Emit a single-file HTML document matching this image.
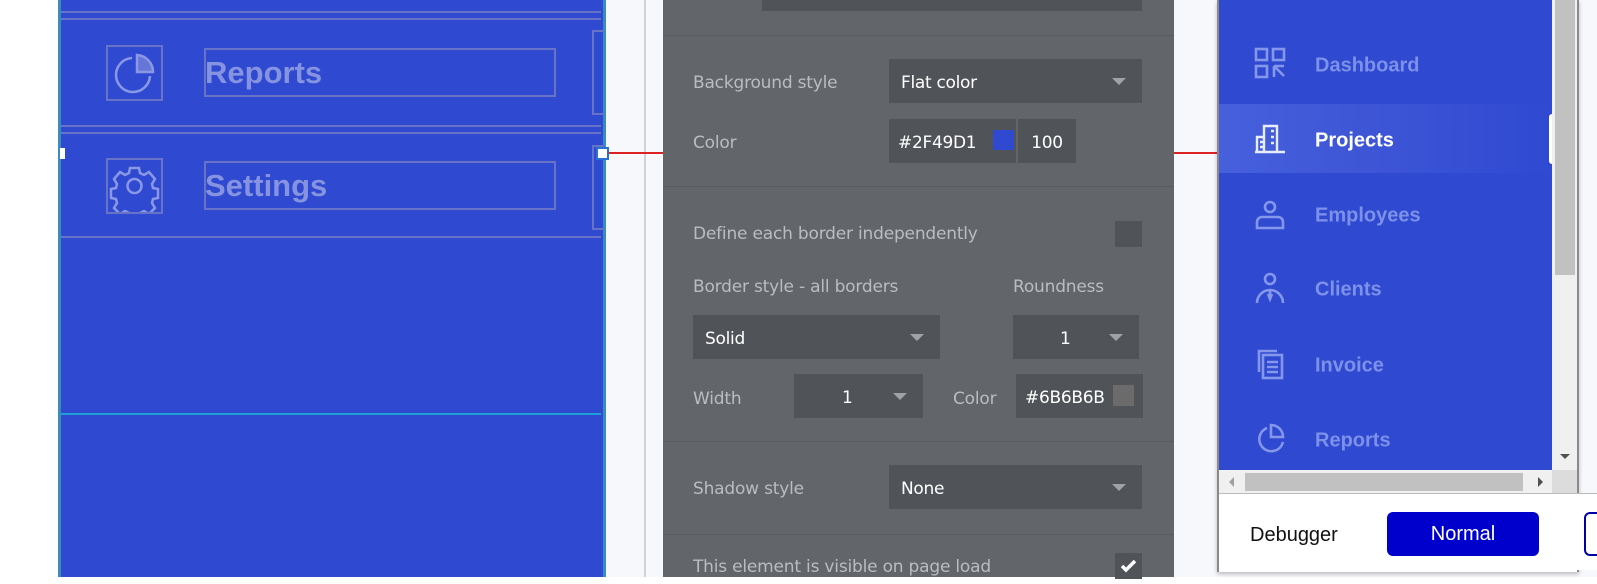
<!DOCTYPE html>
<html><head><meta charset="utf-8">
<style>
*{margin:0;padding:0;box-sizing:border-box}
body{width:1597px;height:577px;overflow:hidden;position:relative;background:#fff;font-family:"Liberation Sans",sans-serif}
.a{position:absolute}
.hl{position:absolute;height:2px;background:#6673c6}
.lbl{position:absolute;color:#babcbe;font-size:17px;font-family:"DejaVu Sans","Liberation Sans",sans-serif;letter-spacing:-0.2px;margin-top:3px}
.inp{position:absolute;background:#505458;color:#fff;font-size:17px;font-family:"DejaVu Sans","Liberation Sans",sans-serif;letter-spacing:-0.3px;display:flex;align-items:center;padding-top:3px}
.car{position:absolute;right:16px;top:50%;margin-top:-3px;width:0;height:0;border-left:7px solid transparent;border-right:7px solid transparent;border-top:7px solid #a0a3a6}
.nav{position:absolute;left:1315px;font-size:20px;font-weight:bold;color:#7d91e8;transform:translateY(-50%);margin-top:2px}
.ic{position:absolute;left:1254px;width:32px;height:32px}
</style></head><body>
<div class="a" style="left:58px;top:0;width:548px;height:577px;background:#2f49d1;border-left:3px solid #3a8cc0;border-right:3px solid #3a8cc0"></div>
<div class="hl" style="left:61px;width:540px;top:11px"></div>
<div class="hl" style="left:61px;width:540px;top:18px"></div>
<div class="hl" style="left:61px;width:540px;top:125px"></div>
<div class="hl" style="left:61px;width:540px;top:132px"></div>
<div class="hl" style="left:61px;width:540px;top:236px"></div>
<div class="a" style="left:61px;width:540px;top:413px;height:2px;background:#1f9fd6"></div>
<div class="a" style="left:592px;top:30px;width:12px;height:85px;border:2px solid #6673c6;border-right:none"></div>
<div class="a" style="left:592px;top:145px;width:12px;height:85px;border:2px solid #6673c6;border-right:none"></div>
<div class="a" style="left:106px;top:45px;width:57px;height:56px;border:2px solid #6673c6"></div>
<div class="a" style="left:204px;top:48px;width:352px;height:49px;border:2px solid #6673c6"></div>
<div class="a" style="left:106px;top:158px;width:57px;height:56px;border:2px solid #6673c6"></div>
<div class="a" style="left:204px;top:161px;width:352px;height:49px;border:2px solid #6673c6"></div>
<div class="a" style="left:205px;top:55px;font-size:31px;font-weight:bold;color:#8593e0">Reports</div>
<div class="a" style="left:205px;top:168px;font-size:31px;font-weight:bold;color:#8593e0">Settings</div>
<svg class="a" style="left:108px;top:47px" width="53" height="52" viewBox="0 0 53 52"><path d="M24 11 A17 17 0 1 0 42 29" fill="none" stroke="#8a98e6" stroke-width="2.5"/><path d="M29 8 A17 17 0 0 1 45 25 L29 25 Z" fill="#6676d6" stroke="#8a98e6" stroke-width="2.5"/></svg>
<svg class="a" style="left:108px;top:160px" width="53" height="52" viewBox="0 0 53 52"><g fill="none" stroke="#8a98e6" stroke-width="2.5"><circle cx="26.5" cy="26" r="7"/><path d="M22 8h9l1 5 4 2 5-3 6 7-3 5 1 4 5 1v9l-5 1-1 4 3 5-6 6-5-3-4 2-1 5h-9l-1-5-4-2-5 3-6-6 3-5-1-4-5-1v-9l5-1 1-4-3-5 6-7 5 3 4-2z"/></g></svg>
<div class="a" style="left:60px;top:148px;width:5px;height:11px;background:#fff"></div>
<div class="a" style="left:606px;top:0;width:57px;height:577px;background:#f7f8fb"></div>
<div class="a" style="left:644px;top:0;width:2px;height:577px;background:#d0d2d6"></div>
<div class="a" style="left:596px;top:152px;width:67px;height:1.5px;background:#d22"></div>
<div class="a" style="left:596px;top:147px;width:13px;height:13px;border:2px solid #2a6fd6;background:#fff"></div>
<div class="a" style="left:663px;top:0;width:511px;height:577px;background:#62666a"></div>
<div class="a" style="left:663px;top:35px;width:511px;height:1px;background:#585c60"></div>
<div class="a" style="left:663px;top:186px;width:511px;height:1px;background:#585c60"></div>
<div class="a" style="left:663px;top:441px;width:511px;height:1px;background:#585c60"></div>
<div class="a" style="left:663px;top:534px;width:511px;height:1px;background:#585c60"></div>
<div class="inp" style="left:762px;top:0;width:380px;height:11px"></div>
<div class="lbl" style="left:693px;top:70px">Background style</div>
<div class="inp" style="left:889px;top:59px;width:253px;height:44px;padding-left:12px">Flat color<div class="car"></div></div>
<div class="lbl" style="left:693px;top:130px">Color</div>
<div class="inp" style="left:889px;top:119px;width:127px;height:44px;padding-left:9px">#2F49D1<div class="a" style="left:104px;top:11px;width:21px;height:20px;background:#2f49d1"></div></div>
<div class="inp" style="left:1018px;top:119px;width:58px;height:44px;justify-content:center">100</div>
<div class="lbl" style="left:693px;top:221px">Define each border independently</div>
<div class="a" style="left:1115px;top:221px;width:27px;height:26px;background:#505458"></div>
<div class="lbl" style="left:693px;top:274px">Border style - all borders</div>
<div class="lbl" style="left:1013px;top:274px">Roundness</div>
<div class="inp" style="left:693px;top:315px;width:247px;height:44px;padding-left:12px">Solid<div class="car"></div></div>
<div class="inp" style="left:1013px;top:315px;width:126px;height:44px;padding-left:47px">1<div class="car"></div></div>
<div class="lbl" style="left:693px;top:386px">Width</div>
<div class="inp" style="left:794px;top:374px;width:129px;height:44px;padding-left:48px">1<div class="car"></div></div>
<div class="lbl" style="left:953px;top:386px">Color</div>
<div class="inp" style="left:1016px;top:374px;width:127px;height:44px;padding-left:9px">#6B6B6B<div class="a" style="left:97px;top:11px;width:21px;height:21px;background:#6b6b6b"></div></div>
<div class="lbl" style="left:693px;top:476px">Shadow style</div>
<div class="inp" style="left:889px;top:465px;width:253px;height:44px;padding-left:12px">None<div class="car"></div></div>
<div class="lbl" style="left:693px;top:554px">This element is visible on page load</div>
<div class="a" style="left:1115px;top:553px;width:27px;height:26px;background:#505458"><svg width="27" height="26" viewBox="0 0 27 26"><path d="M7 13l4 4 9-9" fill="none" stroke="#fff" stroke-width="3.5"/></svg></div>
<div class="a" style="left:1174px;top:0;width:423px;height:577px;background:#f7f8fb"></div>
<div class="a" style="left:1174px;top:152px;width:45px;height:1.5px;background:#d22"></div>
<div class="a" style="left:1217px;top:0;width:362px;height:572px;border-left:2px solid #8a8a8a;border-right:2px solid #8a8a8a;background:#fff;box-shadow:0 2px 4px rgba(0,0,0,.25)"></div>
<div class="a" style="left:1219px;top:0;width:333px;height:470px;background:#2f49d1"></div>
<div class="a" style="left:1219px;top:104px;width:333px;height:69px;background:linear-gradient(90deg,#4760dc,#3a52d4 60%,#2f49d1)"></div>
<div class="a" style="left:1549px;top:114px;width:4px;height:50px;background:#fff;border-radius:3px 0 0 3px"></div>
<div class="a" style="left:1552px;top:0;width:25px;height:470px;background:#f0f0f0"></div>
<div class="a" style="left:1555px;top:0;width:20px;height:275px;background:#c1c1c1"></div>
<div class="a" style="left:1560px;top:454px;border-left:5px solid transparent;border-right:5px solid transparent;border-top:5px solid #505050"></div>
<div class="a" style="left:1219px;top:470px;width:333px;height:23px;background:#f0f0f0"></div>
<div class="a" style="left:1245px;top:473px;width:278px;height:18px;background:#c1c1c1"></div>
<div class="a" style="left:1229px;top:477px;border-top:5px solid transparent;border-bottom:5px solid transparent;border-right:5px solid #a0a0a0"></div>
<div class="a" style="left:1538px;top:477px;border-top:5px solid transparent;border-bottom:5px solid transparent;border-left:5px solid #505050"></div>
<div class="a" style="left:1552px;top:470px;width:25px;height:23px;background:#dcdcdc"></div>
<div class="a" style="left:1219px;top:493px;width:378px;height:77px;background:#fff;border-top:1px solid #bbb"></div>
<div class="a" style="left:1250px;top:524px;font-size:20px;color:#111">Debugger</div>
<div class="a" style="left:1387px;top:512px;width:152px;height:44px;background:#0000cc;border-radius:6px;color:#fff;font-size:20px;display:flex;align-items:center;justify-content:center">Normal</div>
<div class="a" style="left:1584px;top:512px;width:30px;height:44px;border:2px solid #0000aa;border-radius:6px;background:#fff"></div>
<svg class="ic" style="top:47px" viewBox="0 0 32 32" fill="none" stroke="#8497ea" stroke-width="2.6"><rect x="2" y="2" width="11" height="11"/><rect x="19" y="2" width="11" height="11"/><rect x="2" y="19" width="11" height="11"/><path d="M20 19v11M20 19h10M21 20l9 9"/></svg>
<div class="nav" style="top:64px">Dashboard</div>
<svg class="ic" style="top:122px" viewBox="0 0 32 32" fill="none" stroke="#e8ecff" stroke-width="2.4"><path d="M1 30h30M10 29V4h13v25M3 29V15h7M17 9h3M17 15h3M17 21h3M6 20h3M6 25h3"/></svg>
<div class="nav" style="top:139px;color:#fff">Projects</div>
<svg class="ic" style="top:198px" viewBox="0 0 32 32" fill="none" stroke="#8497ea" stroke-width="2.6"><circle cx="16" cy="9" r="5"/><path d="M3 30v-6a5 5 0 0 1 5-5h16a5 5 0 0 1 5 5v6z"/></svg>
<div class="nav" style="top:214px">Employees</div>
<svg class="ic" style="top:272px" viewBox="0 0 32 32" fill="none" stroke="#8497ea" stroke-width="2.6"><circle cx="16" cy="7" r="5"/><path d="M3 31a13 13 0 0 1 26 0M16 18v6M14 22l2 5 2-5"/></svg>
<div class="nav" style="top:288px">Clients</div>
<svg class="ic" style="top:348px" viewBox="0 0 32 32" fill="none" stroke="#8497ea" stroke-width="2.6"><path d="M5 24V3h18"/><rect x="9" y="7" width="19" height="23"/><path d="M13 14h11M13 19h11M13 24h11"/></svg>
<div class="nav" style="top:364px">Invoice</div>
<svg class="ic" style="top:423px" viewBox="0 0 32 32" fill="none" stroke="#8497ea" stroke-width="2.6"><path d="M13 5A12 12 0 1 0 29 19"/><path d="M17 2a12 12 0 0 1 12 12H17z"/></svg>
<div class="nav" style="top:439px">Reports</div>
</body></html>
